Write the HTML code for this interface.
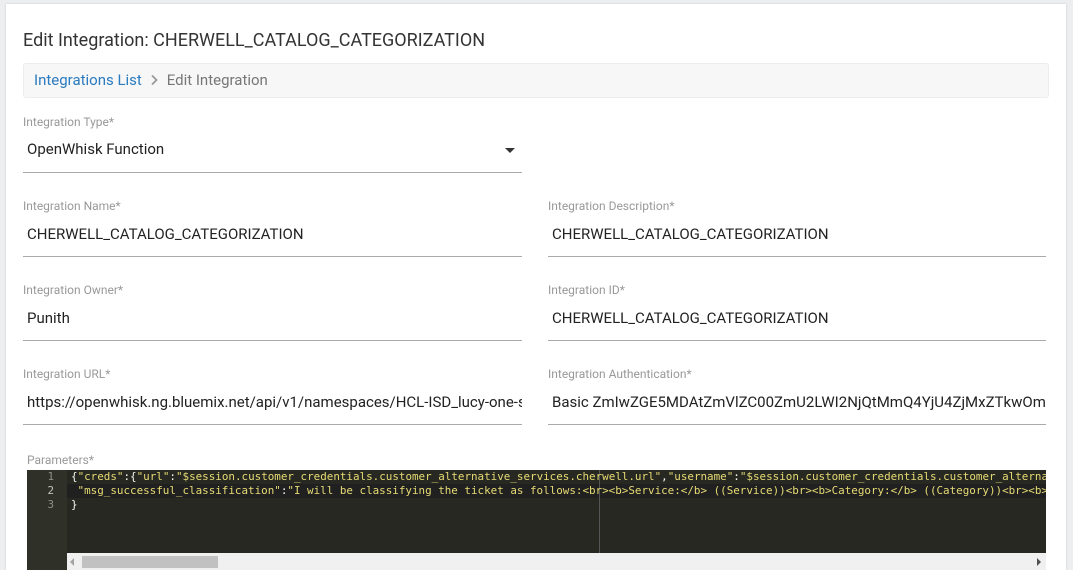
<!DOCTYPE html>
<html><head><style>
html,body{margin:0;width:1073px;height:570px;overflow:hidden}
body{background:#eceef0;font-family:Roboto,"Liberation Sans",sans-serif;position:relative}
.card{position:absolute;left:6px;top:4px;width:1060px;height:566px;background:#fff;box-shadow:0 0 2px rgba(0,0,0,.15)}
.abs{position:absolute}
h1{position:absolute;left:23px;top:30px;margin:0;font-weight:normal;font-size:18px;color:#333}
.bc{position:absolute;left:23px;top:63px;width:1026px;height:35px;background:#f7f7f7;border:1px solid #ececec;border-radius:3px;box-sizing:border-box;font-size:15px;line-height:32px;padding-left:10px;color:#777}
.bc a{color:#2a7bbf;text-decoration:none}
.lbl{position:absolute;font-size:12px;color:#999}
.val{position:absolute;font-size:15px;color:#222;white-space:nowrap;overflow:hidden}
.ln{position:absolute;height:1px;background:#aaa}
.ed{position:absolute;left:27px;top:470px;width:1019px;height:100px;background:#272822;overflow:hidden;font-family:"DejaVu Sans Mono","Liberation Mono",monospace;font-size:10.9px}
.gut{position:absolute;left:0;top:0;width:40px;height:100%;background:#2f3129;color:#8f908a;text-align:right}
.code{position:absolute;left:44px;top:0;color:#e6db74;white-space:pre;line-height:14px}
</style></head><body>
<div class="card"></div>
<h1>Edit Integration: CHERWELL_CATALOG_CATEGORIZATION</h1>
<div class="bc"><a>Integrations List</a> &nbsp;<svg width="10" height="12" viewBox="0 0 10 12" style="vertical-align:-1px"><path d="M3 1.5 L7.5 6 L3 10.5" fill="none" stroke="#999" stroke-width="1.8"/></svg>&nbsp; Edit Integration</div>

<div class="lbl" style="left:23px;top:115px">Integration Type*</div>
<div class="val" style="left:27px;top:140px">OpenWhisk Function</div>
<div class="abs" style="left:505px;top:148px;width:0;height:0;border-left:5px solid transparent;border-right:5px solid transparent;border-top:5px solid #333"></div>
<div class="ln" style="left:23px;top:172px;width:499px"></div>

<div class="lbl" style="left:23px;top:199px">Integration Name*</div>
<div class="val" style="left:27px;top:225px">CHERWELL_CATALOG_CATEGORIZATION</div>
<div class="ln" style="left:23px;top:256px;width:499px"></div>
<div class="lbl" style="left:548px;top:199px">Integration Description*</div>
<div class="val" style="left:552px;top:225px">CHERWELL_CATALOG_CATEGORIZATION</div>
<div class="ln" style="left:548px;top:256px;width:498px"></div>

<div class="lbl" style="left:23px;top:283px">Integration Owner*</div>
<div class="val" style="left:27px;top:309px">Punith</div>
<div class="ln" style="left:23px;top:340px;width:499px"></div>
<div class="lbl" style="left:548px;top:283px">Integration ID*</div>
<div class="val" style="left:552px;top:309px">CHERWELL_CATALOG_CATEGORIZATION</div>
<div class="ln" style="left:548px;top:340px;width:498px"></div>

<div class="lbl" style="left:23px;top:367px">Integration URL*</div>
<div class="val" style="left:27px;top:393px;width:495px">https://openwhisk.ng.bluemix.net/api/v1/namespaces/HCL-ISD_lucy-one-s</div>
<div class="ln" style="left:23px;top:424px;width:499px"></div>
<div class="lbl" style="left:548px;top:367px">Integration Authentication*</div>
<div class="val" style="left:552px;top:393px;width:494px">Basic ZmIwZGE5MDAtZmVlZC00ZmU2LWI2NjQtMmQ4YjU4ZjMxZTkwOmFhYmM</div>
<div class="ln" style="left:548px;top:424px;width:498px"></div>

<div class="lbl" style="left:27px;top:453px">Parameters*</div>
<div class="ed">
<div class="abs" style="left:0;top:14px;width:1019px;height:14px;background:#202020"></div>
<div class="gut"><div style="line-height:14px;padding-right:13px;padding-top:0">1<br><span style="color:#c2c2bf">2</span><br>3</div></div>
<div class="abs" style="left:572px;top:0;width:1px;height:100%;background:#555"></div>
<div class="code"><span style="color:#f8f8f2">{</span>"creds"<span style="color:#f8f8f2">:{</span>"url"<span style="color:#f8f8f2">:</span>"$session.customer_credentials.customer_alternative_services.cherwell.url"<span style="color:#f8f8f2">,</span>"username"<span style="color:#f8f8f2">:</span>"$session.customer_credentials.customer_alternative_services
 "msg_successful_classification"<span style="color:#f8f8f2">:</span>"I will be classifying the ticket as follows:&lt;br&gt;&lt;b&gt;Service:&lt;/b&gt; ((Service))&lt;br&gt;&lt;b&gt;Category:&lt;/b&gt; ((Category))&lt;br&gt;&lt;b&gt;
<span style="color:#f8f8f2">}</span></div>
<div class="abs" style="left:40px;top:83px;width:979px;height:17px;background:#f0f0f0"></div>
<div class="abs" style="left:55px;top:86px;width:136px;height:12px;background:#c1c1c1"></div>
<div class="abs" style="left:43px;top:88px;width:0;height:0;border-top:4px solid transparent;border-bottom:4px solid transparent;border-right:4px solid #a3a3a3"></div>
<div class="abs" style="left:1010px;top:88px;width:0;height:0;border-top:4px solid transparent;border-bottom:4px solid transparent;border-left:4px solid #505050"></div>
</div>
</body></html>
